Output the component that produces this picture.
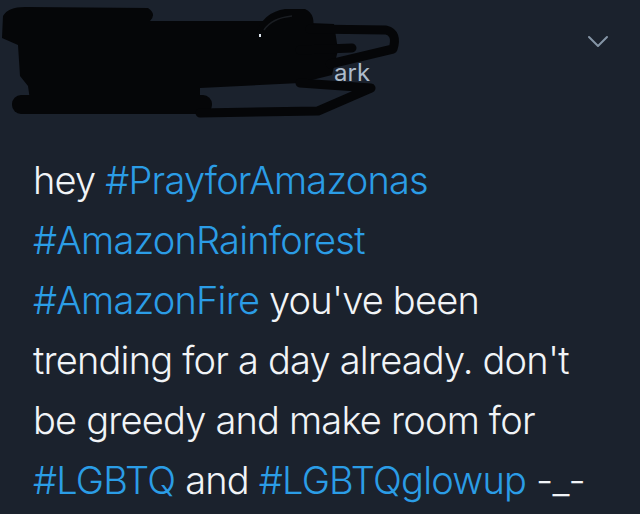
export default function App() {
  const blue = "text-[#2b9de6]";
  return (
    <div className="w-[640px] h-[514px] bg-[#1b222d] overflow-hidden relative" style={{ fontFamily: "Inter, Roboto, 'Liberation Sans', sans-serif" }}>
      <div className="relative h-[150px]">
        <span className="absolute left-[334px] top-[59px] text-[24px] leading-[28px] text-[#aebccb]">ark</span>
        <svg className="absolute left-0 top-0" width="420" height="130" viewBox="0 0 420 130">
          <g fill="#050608">
            <path d="M3 16 Q8 7 25 7 L148 8 Q157 14 150 21 L262 21 L334 24 L338 50 L332 75 L300 83 L200 88 L200 100 L30 100 L28 86 L20 76 L18 45 L2 38 Z" />
            <rect x="12" y="95" width="200" height="19" rx="9" />
            <path d="M256 33 Q264 12 285 9 L305 9 Q317 14 312 33 Z" />
          </g>
          <g stroke="#050608" strokeLinecap="round" strokeLinejoin="round" fill="none">
            <path d="M310 29 L386 30 Q398 33 393 49 L330 64" strokeWidth="9" />
            <path d="M200 113 L318 111 L371 88 L300 83" strokeWidth="9" />
            <path d="M300 50 L352 48" strokeWidth="9" />
          </g>
          <path d="M264 30 Q272 18 292 16" stroke="#1a1d22" strokeWidth="1.5" fill="none" />
          <rect x="259" y="34" width="2" height="3" fill="#dfe6ee" />
        </svg>
        <svg className="absolute left-[586px] top-[33px]" width="24" height="20" viewBox="0 0 24 20">
          <path d="M3 4 L12 13 L21 4" stroke="#8595a6" strokeWidth="2" fill="none" strokeLinecap="round" strokeLinejoin="round" />
        </svg>
      </div>
      <p className="px-[33px] text-[38px] leading-[60px] font-light text-[#f1f4f7] tracking-[-0.8px]">
        hey <span className={blue}>#PrayforAmazonas</span>
        <br />
        <span className={blue}>#AmazonRainforest</span>
        <br />
        <span className={blue}>#AmazonFire</span> you've been
        <br />
        trending for a day already. don't
        <br />
        be greedy and make room for
        <br />
        <span className={blue}>#LGBTQ</span> and <span className={blue}>#LGBTQglowup</span> -_-
      </p>
    </div>
  );
}
